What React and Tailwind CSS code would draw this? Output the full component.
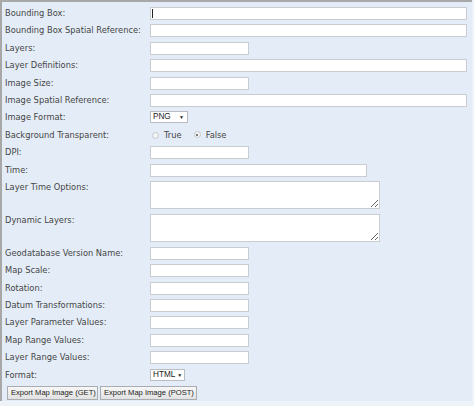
import React from "react";

const inputCls =
  "block h-[13px] border border-[#c9ccd0] bg-white p-0 outline-none";

function Row({ label, children, tall }) {
  return (
    <div className={`flex ${tall ? "h-[33px]" : "h-[17.4px]"}`}>
      <div className="w-[148px] shrink-0 pl-[3px] leading-[13px] whitespace-nowrap">
        {label}
      </div>
      <div className="flex-1">{children}</div>
    </div>
  );
}

function Text({ w }) {
  return <input type="text" className={`${inputCls} ${w}`} />;
}

function Select({ value, w }) {
  return (
    <div
      className={`flex h-[12px] items-center justify-between gap-[2px] border border-[#b9bcc0] bg-white pl-[2px] pr-[3px] text-[8.2px] text-[#222] ${w}`}
      style={{ fontFamily: '"Liberation Sans", Arial, sans-serif' }}
    >
      <span className="leading-[10px]">{value}</span>
      <span className="text-[5px] leading-[10px]">▼</span>
    </div>
  );
}

function Radio({ checked }) {
  return (
    <span className="relative inline-block h-[7px] w-[7px] rounded-full border border-[#c4c7cb] bg-[#f4f4f4]">
      {checked && (
        <span className="absolute left-[1.5px] top-[1.5px] h-[2px] w-[2px] rounded-full bg-[#555]" />
      )}
    </span>
  );
}

function Button({ children, w }) {
  return (
    <button
      className={`h-[14px] border border-[#a9acb0] bg-gradient-to-b from-[#f7f7f7] to-[#e2e2e2] px-[3px] text-[7.6px] leading-[12px] text-[#222] whitespace-nowrap ${w}`}
      style={{ fontFamily: '"Liberation Sans", Arial, sans-serif' }}
    >
      {children}
    </button>
  );
}

export default function App() {
  const wide = "w-[317px]";
  const short = "w-[99px]";
  return (
    <div className="h-[406px] w-[474px] overflow-hidden bg-[#eef3f9]">
      <div
        className="h-[401px] w-[472px] border-l-2 border-t-2 border-[#a8a8a8] bg-[#e4edf7] pt-[5px] text-[8.3px] text-[#454545]"
        style={{ fontFamily: '"DejaVu Sans", Verdana, sans-serif' }}
      >
        <Row label="Bounding Box:">
          <div className="relative">
            <input
              type="text"
              className={`${inputCls} ${wide} border-[#7fa6d1]`}
            />
            <span className="absolute left-[2px] top-[2px] h-[9px] w-px bg-[#222]" />
          </div>
        </Row>
        <Row label="Bounding Box Spatial Reference:">
          <Text w={wide} />
        </Row>
        <Row label="Layers:">
          <Text w={short} />
        </Row>
        <Row label="Layer Definitions:">
          <Text w={wide} />
        </Row>
        <Row label="Image Size:">
          <Text w={short} />
        </Row>
        <Row label="Image Spatial Reference:">
          <Text w={wide} />
        </Row>
        <Row label="Image Format:">
          <Select value="PNG" w="w-[38px]" />
        </Row>
        <Row label="Background Transparent:">
          <div className="flex h-[13px] items-center pl-[2px]">
            <Radio />
            <span className="ml-[5px]">True</span>
            <span className="ml-[12px]">
              <Radio checked />
            </span>
            <span className="ml-[5px]">False</span>
          </div>
        </Row>
        <Row label="DPI:">
          <Text w={short} />
        </Row>
        <Row label="Time:">
          <Text w="w-[217px]" />
        </Row>
        <Row label="Layer Time Options:" tall>
          <textarea className="block h-[28px] w-[230px] border border-[#c9ccd0] bg-white p-0 outline-none" />
        </Row>
        <Row label="Dynamic Layers:" tall>
          <textarea className="block h-[28px] w-[230px] border border-[#c9ccd0] bg-white p-0 outline-none" />
        </Row>
        <Row label="Geodatabase Version Name:">
          <Text w={short} />
        </Row>
        <Row label="Map Scale:">
          <Text w={short} />
        </Row>
        <Row label="Rotation:">
          <Text w={short} />
        </Row>
        <Row label="Datum Transformations:">
          <Text w={short} />
        </Row>
        <Row label="Layer Parameter Values:">
          <Text w={short} />
        </Row>
        <Row label="Map Range Values:">
          <Text w={short} />
        </Row>
        <Row label="Layer Range Values:">
          <Text w={short} />
        </Row>
        <Row label="Format:">
          <Select value="HTML" w="w-[35px]" />
        </Row>
        <div className="flex gap-[2px] pl-[5px]">
          <Button w="w-[91px]">Export Map Image (GET)</Button>
          <Button w="w-[97px]">Export Map Image (POST)</Button>
        </div>
      </div>
    </div>
  );
}
